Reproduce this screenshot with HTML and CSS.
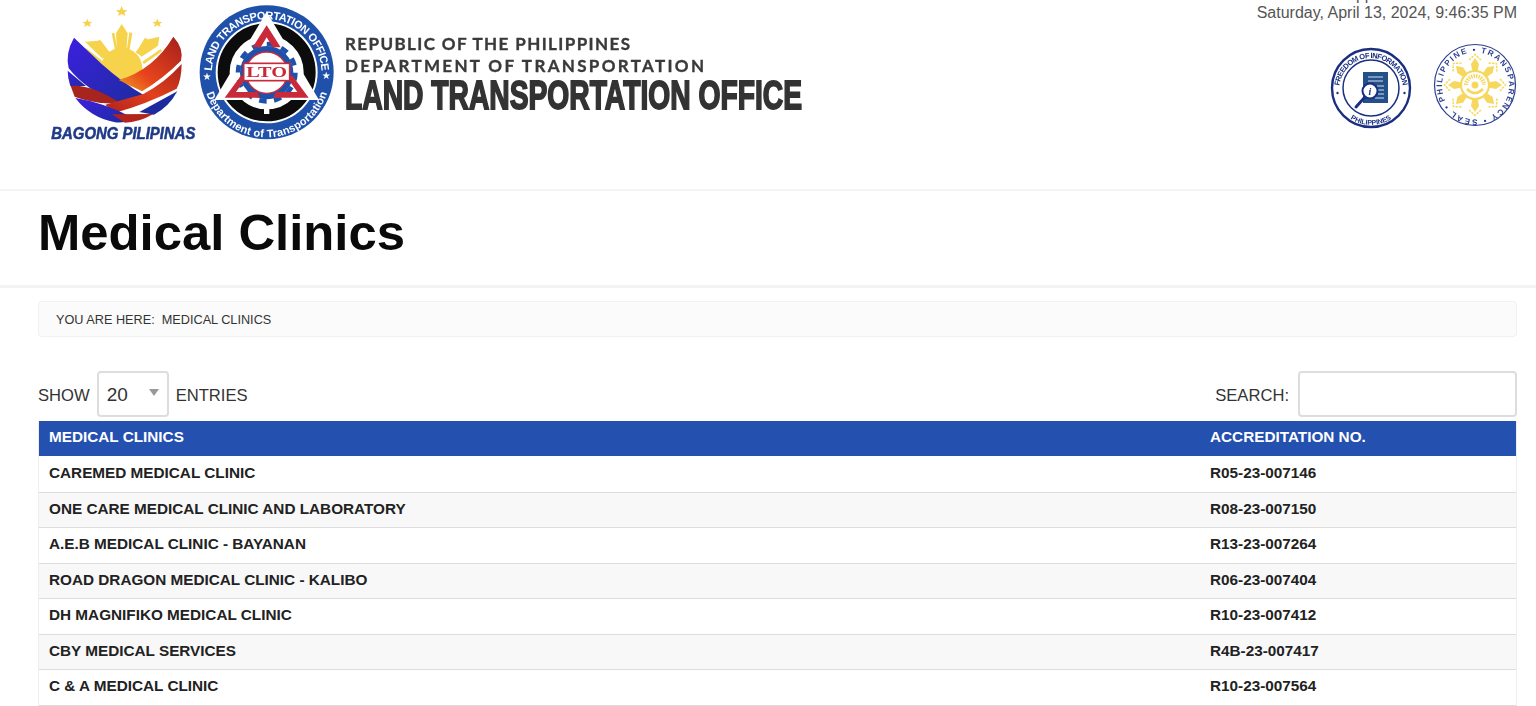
FILE: index.html
```html
<!DOCTYPE html>
<html lang="en">
<head>
<meta charset="utf-8">
<title>Medical Clinics</title>
<link rel="stylesheet" href="styles.css">
</head>
<body>
<div class="page">
<header class="masthead">
  <div class="brand">
    <svg class="logo-bagong" viewBox="54 0 450 450" role="img" aria-label="Bagong Pilipinas">
      <defs>
        <linearGradient id="bp-blue" x1="0" y1="0" x2="1" y2="1"><stop offset="0" stop-color="#3d1fe0"/><stop offset="1" stop-color="#1c2c9e"/></linearGradient>
        <linearGradient id="bp-red" x1="0" y1="1" x2="1" y2="0"><stop offset="0" stop-color="#f0a020"/><stop offset=".35" stop-color="#e8451c"/><stop offset="1" stop-color="#a31f1c"/></linearGradient>
        <linearGradient id="bp-red2" x1="0" y1="1" x2="1" y2="0"><stop offset="0" stop-color="#b0221c"/><stop offset=".5" stop-color="#e2401c"/><stop offset="1" stop-color="#a9231c"/></linearGradient>
      </defs>
      <g fill="#f6d34a">
        <polygon points="275,18 280,30 292,31 283,38 286,48 275,42 264,48 267,38 258,31 270,30"/>
        <polygon points="172,56 176,65 187,66 179,72 182,81 172,76 162,81 165,72 157,66 168,65"/>
        <polygon points="382,56 386,65 397,66 389,72 392,81 382,76 372,81 375,72 367,66 378,65"/>
        <polygon points="275,72 293,100 289,155 261,155 258,100"/>
        <polygon points="245,100 253,98 263,152 256,154"/>
        <polygon points="298,97 307,99 298,154 290,152"/>
        <polygon points="388,110 384,137 335,170 318,155 346,120"/>
        <polygon points="165,125 207,122 236,160 218,176"/>
        <polygon points="203,122 211,120 243,162 236,167"/>
        <polygon points="345,113 353,117 325,163 318,158"/>
        <polygon points="163,150 168,144 220,185 214,192"/>
        <polygon points="392,147 396,154 342,192 337,185"/>
        <circle cx="275" cy="205" r="62"/>
      </g>
      <path fill="url(#bp-blue)" d="M132,113 L215,192 Q280,250 342,286 L270,314 Q170,272 116,205 Q105,160 132,113Z"/>
      <path fill="url(#bp-red)" d="M430,110 Q462,145 453,182 Q400,235 336,274 L266,240 Q370,210 430,110Z"/>
      <path fill="url(#bp-blue)" d="M113,212 L168,258 L121,258 Q113,235 113,212Z"/>
      <path fill="#a8241e" d="M122,258 Q185,252 274,312 L226,310 Q170,304 134,290Z"/>
      <path fill="url(#bp-red2)" d="M340,282 Q405,248 455,192 Q454,240 440,266 Q350,312 250,340 L226,314Z"/>
      <path fill="url(#bp-blue)" d="M136,294 Q225,308 314,356 Q285,370 255,367 Q180,352 136,294Z"/>
      <path fill="#1c2c9e" d="M328,336 L442,274 Q416,322 372,344Z"/>
      <path fill="#b3241d" d="M246,343 L370,342 Q325,368 285,368 Z"/>
      <text class="bagong-word" x="64" y="417" textLength="432" lengthAdjust="spacingAndGlyphs">BAGONG PILIPINAS</text>
    </svg>
    <svg class="logo-lto" viewBox="504 0 420 450" role="img" aria-label="Land Transportation Office">
      <defs>
        <path id="lto-top" d="M545,222 A165,165 0 0 1 875,222"/>
        <path id="lto-bot" d="M520,222 A190,190 0 0 0 900,222"/>
      </defs>
      <circle cx="710" cy="217" r="201" fill="#1f51ab"/>
      <circle cx="710" cy="217" r="153" fill="#fff"/>
      <text class="lto-ring" font-size="33"><textPath href="#lto-top" startOffset="50%" text-anchor="middle" textLength="500">LAND TRANSPORTATION OFFICE</textPath></text>
      <text class="lto-ring" font-size="33"><textPath href="#lto-bot" startOffset="50%" text-anchor="middle" textLength="480">Department of Transportation</textPath></text>
      <text class="lto-star" x="531" y="240" font-size="30" text-anchor="middle">★</text>
      <text class="lto-star" x="889" y="238" font-size="30" text-anchor="middle">★</text>
      <circle cx="710" cy="217" r="129" fill="none" stroke="#0c0c0c" stroke-width="36"/>
      <rect x="702" y="318" width="16" height="24" fill="#fff"/>
      <polygon points="710,35 867,300 553,300" fill="#fff"/>
      <circle cx="710" cy="218" r="86" fill="none" stroke="#1f51ab" stroke-width="14" stroke-dasharray="22.500 22.500"/>
      <circle cx="710" cy="218" r="80" fill="#1f51ab"/>
      <circle cx="710" cy="218" r="62" fill="#fff" stroke="#c92a3a" stroke-width="4"/>
      <polygon points="710,76 752,142 728,142 710,112 692,142 668,142" fill="#c92a3a"/>
      <polygon points="632,228 652,228 618,276 682,276 690,293 584,293" fill="#c92a3a"/>
      <polygon points="788,228 768,228 802,276 738,276 730,293 836,293" fill="#c92a3a"/>
      <rect x="641" y="190" width="138" height="52" fill="#fff" stroke="#c92a3a" stroke-width="5"/>
      <text class="lto-mark" x="710" y="232" font-size="46" text-anchor="middle" textLength="122" lengthAdjust="spacingAndGlyphs">LTO</text>
    </svg>
    <svg class="agency" viewBox="0 0 460 90" role="img" aria-label="Agency name">
      <text class="agency-line" x="0" y="20" textLength="285" lengthAdjust="spacing">REPUBLIC OF THE PHILIPPINES</text>
      <text class="agency-line" x="0" y="42" textLength="359" lengthAdjust="spacing">DEPARTMENT OF TRANSPORTATION</text>
      <text class="agency-main" x="0" y="79" textLength="457" lengthAdjust="spacingAndGlyphs">LAND TRANSPORTATION OFFICE</text>
    </svg>
  </div>
  <div class="masthead-side">
    <div class="clock"><span class="clock-label">Philippine Standard Time:</span><span>Saturday, April 13, 2024, 9:46:35 PM</span></div>
    <div class="seals">
      <svg class="seal-foi" viewBox="0 0 84 84" role="img" aria-label="Freedom of Information">
        <defs>
          <path id="foi-top" d="M10,44 A32,32 0 0 1 74,44"/>
          <path id="foi-bot" d="M5,42 A37,37 0 0 0 79,42"/>
        </defs>
        <circle cx="42" cy="42" r="39" fill="#fff" stroke="#1b2f82" stroke-width="2.400"/>
        <circle cx="42" cy="42" r="28" fill="#fff" stroke="#1b2f82" stroke-width="1.500"/>
        <text class="foi-ring" font-size="7.500"><textPath href="#foi-top" startOffset="50%" text-anchor="middle" textLength="92">FREEDOM OF INFORMATION</textPath></text>
        <text class="foi-ring" font-size="7"><textPath href="#foi-bot" startOffset="50%" text-anchor="middle">PHILIPPINES</textPath></text>
        <circle cx="8.500" cy="47" r="1.200" fill="#1b2f82"/>
        <circle cx="75.500" cy="47" r="1.200" fill="#1b2f82"/>
        <rect x="34" y="26" width="25" height="31" fill="#235089"/>
        <path d="M39,31h15M39,35h15M48,40h7M48,44h7M49,48h6M46,52h9" stroke="#cfe0ee" stroke-width="1.100"/>
        <path d="M36,51 L27,61" stroke="#1b2f82" stroke-width="3" stroke-linecap="round"/>
        <circle cx="41" cy="45" r="7.500" fill="#fff" stroke="#1b2f82" stroke-width="2"/>
        <text class="foi-i" x="41" y="49" font-size="10" text-anchor="middle">i</text>
      </svg>
      <svg class="seal-pts" viewBox="0 0 84 84" role="img" aria-label="Philippine Transparency Seal">
        <defs>
          <path id="pts-ring" d="M12.400,57.600 A33.500,33.500 0 1 1 12.700,58.200"/>
          <g id="pts-ray">
            <polygon points="42,15 46,21 44.500,29 39.500,29 38,21"/>
            <path d="M36,17 L42,11.500 L48,17" fill="none" stroke="#f6d860" stroke-width="1.500" stroke-dasharray="2.500 1"/>
          </g>
        </defs>
        <circle cx="42" cy="42" r="40.500" fill="#fff" stroke="#2d3f90" stroke-width="1.200"/>
        <text class="pts-ring" font-size="8"><textPath href="#pts-ring" textLength="205">PHILIPPINE • TRANSPARENCY • SEAL •</textPath></text>
        <g fill="#f6d860">
          <use href="#pts-ray"/>
          <use href="#pts-ray" transform="rotate(45 42 42)"/>
          <use href="#pts-ray" transform="rotate(90 42 42)"/>
          <use href="#pts-ray" transform="rotate(135 42 42)"/>
          <use href="#pts-ray" transform="rotate(180 42 42)"/>
          <use href="#pts-ray" transform="rotate(225 42 42)"/>
          <use href="#pts-ray" transform="rotate(270 42 42)"/>
          <use href="#pts-ray" transform="rotate(315 42 42)"/>
        </g>
        <circle cx="42" cy="42" r="14" fill="#fff" stroke="#f6d860" stroke-width="2.200"/>
        <circle cx="42" cy="42" r="3.500" fill="#f6d860"/>
        <path d="M33,42 A9,9 0 0 1 51,42" fill="none" stroke="#f6d860" stroke-width="4" stroke-dasharray="1.500 1"/>
        <path d="M34,46 Q42,54 50,46" fill="none" stroke="#f6d860" stroke-width="2.500"/>
      </svg>
    </div>
  </div>
</header>
<section class="title-band"><h1>Medical Clinics</h1></section>
<main class="content">
  <nav class="crumb">YOU ARE HERE:&nbsp; MEDICAL CLINICS</nav>
  <div class="controls">
    <div class="length">
      <span class="ctl-label">SHOW</span>
      <div class="select-box"><span class="select-value">20</span><i class="caret"></i></div>
      <span class="ctl-label">ENTRIES</span>
    </div>
    <div class="search"><span class="ctl-label">SEARCH:</span><div class="search-box"></div></div>
  </div>
  <table class="clinics">
    <thead><tr><th>MEDICAL CLINICS</th><th>ACCREDITATION NO.</th></tr></thead>
    <tbody>
      <tr><td>CAREMED MEDICAL CLINIC</td><td>R05-23-007146</td></tr>
      <tr><td>ONE CARE MEDICAL CLINIC AND LABORATORY</td><td>R08-23-007150</td></tr>
      <tr><td>A.E.B MEDICAL CLINIC - BAYANAN</td><td>R13-23-007264</td></tr>
      <tr><td>ROAD DRAGON MEDICAL CLINIC - KALIBO</td><td>R06-23-007404</td></tr>
      <tr><td>DH MAGNIFIKO MEDICAL CLINIC</td><td>R10-23-007412</td></tr>
      <tr><td>CBY MEDICAL SERVICES</td><td>R4B-23-007417</td></tr>
      <tr><td>C &amp; A MEDICAL CLINIC</td><td>R10-23-007564</td></tr>
      <tr><td>&nbsp;</td><td>&nbsp;</td></tr>
    </tbody>
  </table>
</main>
</div>
</body>
</html>
```
FILE: styles.css
```css
* { box-sizing: border-box; }
html, body { margin: 0; padding: 0; background: #fff; }
body { font-family: "Liberation Sans", Arial, sans-serif; color: #222; }
.page { height: 706px; overflow: hidden; }

.masthead {
  height: 191px;
  border-bottom: 2px solid #f4f4f4;
  display: flex;
  justify-content: space-between;
  padding: 0 19px 0 48px;
}
.brand { display: flex; align-items: flex-start; }
.logo-bagong { width: 150px; height: 150px; overflow: visible; filter: blur(.4px); }
.logo-lto { width: 140px; height: 150px; filter: blur(.4px); }
.agency { width: 460px; height: 90px; margin: 30px 0 0 7px; overflow: visible; filter: blur(.35px); }

.bagong-word { font: italic 700 47px "Liberation Sans", sans-serif; fill: #1f3a86; stroke: #1f3a86; stroke-width: 1.500px; }
.lto-ring { font-family: "Liberation Sans", sans-serif; font-weight: 700; fill: #fff; }
.lto-star { font-family: "DejaVu Sans", sans-serif; fill: #fff; }
.lto-mark { font-family: "Liberation Serif", serif; font-weight: 700; fill: #c92a3a; }
.agency-line { font: 700 17px "Lato", "Liberation Sans", sans-serif; fill: #3a3a3a; stroke: #3a3a3a; stroke-width: .35px; }
.agency-main { font: 700 40px "Liberation Sans", sans-serif; fill: #333; stroke: #333; stroke-width: 1.800px; }

.masthead-side { display: flex; flex-direction: column; align-items: flex-end; }
.clock {
  margin-top: -13px;
  font-size: 16px;
  line-height: 20px;
  color: #555;
  display: flex;
  flex-direction: column;
}
.clock-label { line-height: 16px; align-self: flex-end; margin-right: 9px; }
.seals { display: flex; gap: 20px; margin-top: 20px; filter: blur(.3px); }
.seal-foi, .seal-pts { width: 84px; height: 84px; overflow: visible; }
.seal-foi { margin-top: 3px; }
.foi-ring { font-family: "Liberation Sans", sans-serif; font-weight: 700; fill: #1b2f82; }
.foi-i { font-family: "Liberation Serif", serif; font-weight: 700; font-style: italic; fill: #1b2f82; }
.pts-ring { font-family: "Liberation Sans", sans-serif; font-weight: 700; fill: #2d3f90; }

.title-band {
  height: 97px;
  border-bottom: 3px solid #f3f3f3;
  padding: 0 38px;
}
h1 {
  margin: 0;
  font-size: 50.800px;
  line-height: 84px;
  font-weight: 700;
  color: #0a0a0a;
}

.content { padding: 13px 19px 0 38px; }
.crumb {
  height: 36px;
  background: #fbfbfb;
  border: 1px solid #f1f1f1;
  border-radius: 4px;
  padding-left: 17px;
  font-size: 12.700px;
  line-height: 36px;
  color: #333;
}
.controls {
  display: flex;
  justify-content: space-between;
  align-items: center;
  margin-top: 34px;
  font-size: 16.600px;
  color: #333;
}
.length, .search { display: flex; align-items: center; }
.length { gap: 7px; }
.search { gap: 9px; }
.ctl-label { padding-top: 3px; }
.select-box {
  width: 72px;
  height: 46px;
  border: 2px solid #ddd;
  border-radius: 4px;
  padding: 0 0 0 8px;
  display: flex;
  align-items: center;
  justify-content: space-between;
  font-size: 19px;
  background: #fff;
}
.select-value { padding-top: 2px; }
.caret {
  width: 0;
  height: 0;
  margin: 0 8px 3px 0;
  border-left: 5px solid transparent;
  border-right: 5px solid transparent;
  border-top: 7px solid #999;
}
.search-box {
  width: 219px;
  height: 46px;
  border: 2px solid #ddd;
  border-radius: 4px;
  background: #fff;
}

.clinics {
  width: 100%;
  margin: 4px 0 0;
  border-collapse: separate;
  border-spacing: 0;
  table-layout: fixed;
  font-size: 15.300px;
  font-weight: 700;
  border-left: 1px solid #eee;
  border-right: 1px solid #eee;
}
.clinics th:first-child, .clinics td:first-child { width: 1161px; }
.clinics th {
  height: 35px;
  padding: 0 10px 4px;
  background: #2450b0;
  color: #fff;
  text-align: left;
  font-weight: 700;
}
.clinics td {
  height: 35.500px;
  padding: 0 10px 2px;
  border-top: 1px solid #ddd;
  color: #222;
}
.clinics tbody tr:first-child td { border-top: 0; }
.clinics tbody tr:nth-child(even) td { background: #f8f8f8; }
```
